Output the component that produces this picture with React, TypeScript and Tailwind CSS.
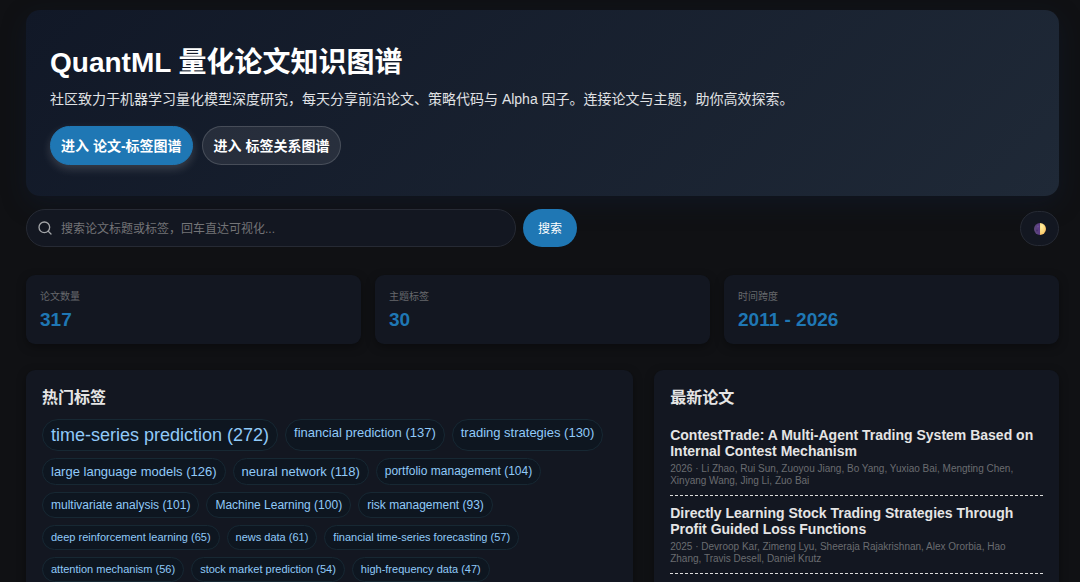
import { Search } from "lucide-react";

const stats = [
  { label: "论文数量", value: "317" },
  { label: "主题标签", value: "30" },
  { label: "时间跨度", value: "2011 - 2026" },
];

const tags = [
  { name: "time-series prediction", count: 272, size: "text-[18px] leading-[24px]" },
  { name: "financial prediction", count: 137, size: "text-[13px] leading-[19px]" },
  { name: "trading strategies", count: 130, size: "text-[13px] leading-[19px]" },
  { name: "large language models", count: 126, size: "text-[13px] leading-[19px]" },
  { name: "neural network", count: 118, size: "text-[13px] leading-[19px]" },
  { name: "portfolio management", count: 104, size: "text-[12px] leading-[19px]" },
  { name: "multivariate analysis", count: 101, size: "text-[12px] leading-[18px]" },
  { name: "Machine Learning", count: 100, size: "text-[12px] leading-[18px]" },
  { name: "risk management", count: 93, size: "text-[12px] leading-[18px]" },
  { name: "deep reinforcement learning", count: 65, size: "text-[11px] leading-[17px]" },
  { name: "news data", count: 61, size: "text-[11px] leading-[17px]" },
  { name: "financial time-series forecasting", count: 57, size: "text-[11px] leading-[17px]" },
  { name: "attention mechanism", count: 56, size: "text-[11px] leading-[17px]" },
  { name: "stock market prediction", count: 54, size: "text-[11px] leading-[17px]" },
  { name: "high-frequency data", count: 47, size: "text-[11px] leading-[17px]" },
];

const papers = [
  {
    title: "ContestTrade: A Multi-Agent Trading System Based on Internal Contest Mechanism",
    year: 2026,
    authors: "Li Zhao, Rui Sun, Zuoyou Jiang, Bo Yang, Yuxiao Bai, Mengting Chen, Xinyang Wang, Jing Li, Zuo Bai",
  },
  {
    title: "Directly Learning Stock Trading Strategies Through Profit Guided Loss Functions",
    year: 2025,
    authors: "Devroop Kar, Zimeng Lyu, Sheeraja Rajakrishnan, Alex Ororbia, Hao Zhang, Travis Desell, Daniel Krutz",
  },
];

function HalfMoon() {
  return (
    <svg viewBox="0 0 24 24" className="h-3 w-3" aria-hidden="true">
      <defs>
        <radialGradient id="moon-lit" cx="0.3" cy="0.3" r="0.9">
          <stop offset="0" stopColor="#fff0a0" />
          <stop offset="0.6" stopColor="#fcd274" />
          <stop offset="1" stopColor="#e8964a" />
        </radialGradient>
        <linearGradient id="moon-dark" x1="0" x2="1">
          <stop offset="0" stopColor="#5d4a78" />
          <stop offset="1" stopColor="#5b3b86" />
        </linearGradient>
      </defs>
      <path d="M12 0a12 12 0 0 0 0 24z" fill="url(#moon-dark)" />
      <path d="M12 0a12 12 0 0 1 0 24z" fill="url(#moon-lit)" />
      <circle cx="6" cy="15" r="2" fill="#4a3070" />
      <circle cx="8" cy="7" r="2" fill="#6b4c98" />
    </svg>
  );
}

function Hero() {
  return (
    <section className="rounded-[14px] bg-linear-135 from-[#111827] to-[#1f2937] px-[24px] pt-[33px] pb-[31px] shadow-[0_8px_24px_rgba(16,32,56,0.35)]">
      <h1 className="text-[28px] leading-[40px] font-bold text-white">QuantML 量化论文知识图谱</h1>
      <p className="mt-[6px] text-[14px] leading-[20px] text-[#e0e2e5]">
        社区致力于机器学习量化模型深度研究，每天分享前沿论文、策略代码与 Alpha 因子。连接论文与主题，助你高效探索。
      </p>
      <div className="mt-[17px] flex flex-wrap gap-[9px]">
        <a
          href="#papers"
          className="rounded-full border border-[#1f77b4] bg-[#1f77b4] px-[10px] pt-[10px] pb-[8px] text-[14px] leading-[19px] font-bold text-white shadow-[0_4px_10px_rgba(255,255,255,0.16)]"
        >
          进入 论文-标签图谱
        </a>
        <a
          href="#tags"
          className="rounded-full border border-white/15 bg-white/8 px-[11px] pt-[10px] pb-[8px] text-[14px] leading-[19px] font-bold text-white"
        >
          进入 标签关系图谱
        </a>
      </div>
    </section>
  );
}

function SearchBar() {
  return (
    <div className="mt-[13px] flex items-center justify-between">
      <form className="flex flex-1 gap-[7px]" onSubmit={(e) => e.preventDefault()}>
        <label className="flex h-[38px] w-full max-w-[490px] items-center gap-2 rounded-full border border-[#262a34] bg-[#131721] px-[10px]">
          <Search className="h-4 w-4 shrink-0 text-[#a3a5a8]" aria-hidden="true" />
          <input
            type="search"
            aria-label="搜索"
            placeholder="搜索论文标题或标签，回车直达可视化..."
            className="min-w-0 flex-1 bg-transparent pt-px text-[12px] text-[#e5e5e5] outline-none placeholder:text-[#737477]"
          />
        </label>
        <button type="submit" className="shrink-0 rounded-full bg-[#1f77b4] px-[15px] pt-[2px] text-[12px] text-white">
          搜索
        </button>
      </form>
      <button
        type="button"
        aria-label="切换主题"
        className="flex h-[35px] w-[39px] items-center justify-center rounded-full border border-[#262a34] bg-[#131721] pt-px"
      >
        <HalfMoon />
      </button>
    </div>
  );
}

export default function App() {
  return (
    <main className="h-screen overflow-hidden bg-[#101114] pt-[10px] pr-[21px] pl-[26px] font-['Liberation_Sans','Noto_Sans_CJK_SC',sans-serif] text-[#e5e5e5]">
      <Hero />
      <SearchBar />

      <section className="mt-[28px] grid grid-cols-3 gap-[14px]">
        {stats.map((s) => (
          <div key={s.label} className="rounded-[9px] bg-[#131721] px-[14px] pt-[14px] pb-[13px] shadow-[0_3px_10px_rgba(0,0,0,0.35)]">
            <p className="text-[10px] leading-[16px] text-[#66686c]">{s.label}</p>
            <p className="mt-[3px] text-[19px] leading-[23px] font-bold text-[#1f77b4]">{s.value}</p>
          </div>
        ))}
      </section>

      <div className="mt-[26px] grid grid-cols-[3fr_2fr] gap-[21px]">
        <section id="tags" className="rounded-[9px] bg-[#131721] p-[16px] shadow-[0_3px_10px_rgba(0,0,0,0.35)]">
          <h2 className="text-[16px] leading-[24px] font-bold">热门标签</h2>
          <div className="mt-[9px] flex flex-wrap gap-[7px]">
            {tags.map((t) => (
              <a
                key={t.name}
                href="#papers"
                className={`rounded-full border border-[#172833] bg-[#0e1620] px-[8px] py-[3px] text-[#90caf9] ${t.size}`}
              >
                {`${t.name} (${t.count})`}
              </a>
            ))}
          </div>
        </section>

        <section id="papers" className="rounded-[9px] bg-[#131721] p-[16px] shadow-[0_3px_10px_rgba(0,0,0,0.35)]">
          <h2 className="text-[16px] leading-[24px] font-bold">最新论文</h2>
          <ul className="mt-[8px]">
            {papers.map((p) => (
              <li key={p.title} className="border-b border-dashed border-[#dddddd] pt-[9px] pb-[8px]">
                <a href="#papers" className="block text-[14px] leading-[16px] font-bold">
                  {p.title}
                </a>
                <p className="mt-[4px] pr-2 text-[10px] leading-[12px] text-[#6a6c70]">
                  {`${p.year} · ${p.authors}`}
                </p>
              </li>
            ))}
          </ul>
        </section>
      </div>
    </main>
  );
}
